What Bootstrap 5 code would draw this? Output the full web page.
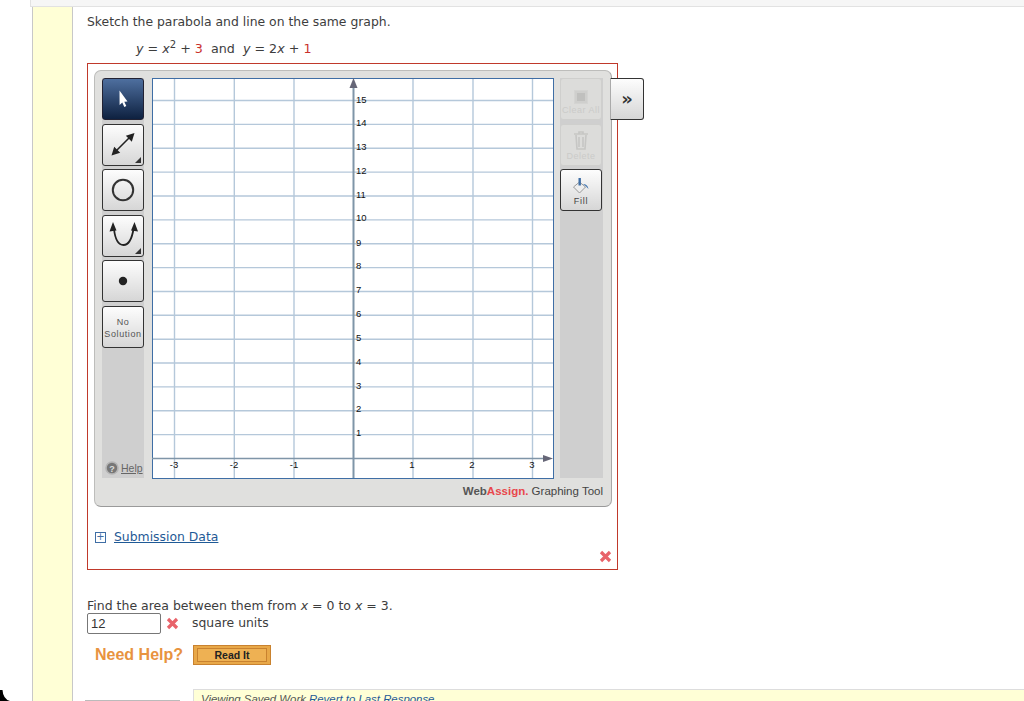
<!DOCTYPE html>
<html lang="en">
<head>
<meta charset="utf-8">
<title>Graphing question</title>
<link href="https://cdn.jsdelivr.net/npm/bootstrap@5.3.0/dist/css/bootstrap.min.css" rel="stylesheet">
<style>
html,body{height:701px;overflow:hidden;background:#fff}
body{font-family:"DejaVu Sans",Verdana,sans-serif;font-size:12.4px;color:#3d3d3d;line-height:1.2;position:relative}
.top-strip{height:7px;margin-left:30px;background:#f6f6f6;border-bottom:1px solid #e2e2e2;border-left:1px solid #e2e2e2}
.page-row{margin-left:32px;height:694px}
.side-rail{width:41px;flex:none;background:#ffffd6;border-left:1px solid #c8c8c8;border-right:1px solid #c8c8c8}
.q-body{padding-left:14px;width:570px;flex:none}
.q-title{margin:0;padding-top:8px;height:34px}
.q-eq{margin:0 0 0 49px;height:22px;font-size:12.7px}
.q-eq sup{font-size:10px;top:-.5em}
.num-red{color:#c9302c}
.answer-box{width:531px;height:507px;border:1px solid #c0392b;padding:6px;position:relative}
.tool-panel{width:518px;height:437px;background:#e0e0de;border:1px solid #bdbdbb;border-bottom-color:#9a9a9a;border-right-color:#a8a8a8;border-radius:7px;padding:7px 7px 0 7px}
.tool-col{width:42px;height:400px;background:#cfcfcf;flex:none}
.tool-col-r{width:43px}
.t-btn{width:42px;height:42px;border:1px solid #333;border-radius:3px;background:linear-gradient(#fdfdfd,#d6d6d6);padding:0;margin:0 0 3.6px 0;color:#333;font-size:9px;letter-spacing:.5px;line-height:12px;font-family:"Liberation Sans",sans-serif;position:relative;display:block}
.t-btn svg{display:block;margin:auto}
.t-active{background:linear-gradient(#4e6f9f,#0e2140);border-color:#223}
.t-off{border-color:#cfcfcd;background:#dcdcda;color:#cbcbc9}
.t-fill{color:#444;letter-spacing:.8px}
.t-nosol{color:#555;line-height:12.5px;padding-top:3px;letter-spacing:.6px}
.corner-tri{position:absolute;right:2px;bottom:2px;width:0;height:0;border-style:solid;border-width:0 0 6px 6px;border-color:transparent transparent #333 transparent}
.help-row{font-family:"Liberation Sans",sans-serif;font-size:10.5px;color:#666;padding-left:3px;height:20px;align-items:center;gap:2px}
.help-row span{text-decoration:underline}
.graph-svg{display:block;flex:none;margin:0 6px 0 8px}
.graph-svg text{font-family:"Liberation Sans",sans-serif;font-size:9.5px;fill:#111}
.tool-foot{text-align:right;font-family:"Liberation Sans",sans-serif;font-size:11.5px;padding:6px 1px 0 0;color:#444}
.tool-foot b{color:#555}
.tool-foot b span{color:#e8474c}
.expand-btn{position:absolute;left:522px;top:14px;width:34px;height:42px;border:1px solid #333;border-left-color:#aaa;border-radius:0 3px 3px 0;background:linear-gradient(#fdfdfd,#d6d6d6);padding:0;font-family:"DejaVu Sans",sans-serif;font-weight:bold;font-size:18px;line-height:18px;color:#333}
.sub-row{margin:23px 0 0 1px;gap:8px;align-items:center}
.plus-box{width:11px;height:11px;border:1px solid #3f6ea5;color:#3f6ea5;display:flex;align-items:center;justify-content:center;font-size:10px;line-height:1}
.sub-link{color:#1f5a96}
.red-x{position:absolute;right:5px;bottom:6px}
.q-find{margin:28px 0 0 0;height:15px;font-size:12.5px}
.ans-row{gap:5px;margin-top:0;height:21px}
.ans-input{width:74px;height:21px;border:1px solid #777;border-radius:2px;padding:0 3px;font-family:"Liberation Sans",sans-serif;font-size:13px;color:#333;background:#fff}
.units{margin-left:8px}
.help-line{margin:11px 0 0 8px;gap:10px}
.need-help{font-family:"Liberation Sans",sans-serif;font-weight:bold;font-size:16px;color:#e8933f;line-height:20px}
.read-it{width:78px;height:20px;border:1px solid #c9822f;background:#e8a848;padding:2px 3px;display:flex}
.read-it span{flex:1;background:#eeb153;border:1px solid #c9822f;font-family:"Liberation Sans",sans-serif;font-weight:bold;font-size:10.5px;color:#222;text-align:center;line-height:12px}
.foot-row{margin-top:24px;gap:13px;align-items:flex-start}
.foot-rule{width:95px;height:1px;flex:none;background:#bbb;margin-top:11px;margin-left:-2px}
.notice{flex:none;width:840px;height:20px;background:#ffffd6;border-top:1px solid #ddd;border-left:1px solid #ddd;padding-left:7px;font-style:italic;font-family:"Liberation Sans",sans-serif;font-size:11.4px;white-space:nowrap;color:#555;line-height:15px;padding-top:2px}
.notice a{color:#1f5a96;text-decoration:none}
.black-corner{position:absolute;left:0;bottom:0;display:block}
</style>
</head>
<body>
<div class="top-strip"></div>
<div class="page-row d-flex">
  <div class="side-rail"></div>
  <div class="q-body">
    <p class="q-title">Sketch the parabola and line on the same graph.</p>
    <p class="q-eq"><i>y</i> = <i>x</i><sup>2</sup> + <span class="num-red">3</span>&nbsp; and &nbsp;<i>y</i> = 2<i>x</i> + <span class="num-red">1</span></p>
    <div class="answer-box">
      <div class="tool-panel">
        <div class="d-flex">
          <div class="tool-col d-flex flex-column">
            <button class="t-btn t-active" type="button" aria-label="Select"><svg width="40" height="40" viewBox="0 0 40 40"><path d="M16.500 11.500l8 11-3.200.2 2 4.300-2 .9-2-4.400-2.700 2.500z" fill="#fff"/></svg></button>
            <button class="t-btn" type="button" aria-label="Line"><svg width="40" height="40" viewBox="0 0 40 40"><path d="M12 27L28 11" stroke="#222" stroke-width="1.600"/><path d="M31.500 8l-2.700 8.700-6-6zM8.500 30.500l2.700-8.700 6 6z" fill="#222"/></svg><span class="corner-tri"></span></button>
            <button class="t-btn" type="button" aria-label="Circle"><svg width="40" height="40" viewBox="0 0 40 40"><circle cx="20" cy="20" r="10.200" fill="none" stroke="#333" stroke-width="2"/></svg></button>
            <button class="t-btn" type="button" aria-label="Parabola"><svg width="40" height="40" viewBox="0 0 40 40"><path d="M11 13c1 9 4 16 9.500 16S29 22 30.500 13" fill="none" stroke="#222" stroke-width="1.800"/><path d="M10 6l3.500 8.500-7 1zM31.500 6l3.500 9.500-7-1z" fill="#222"/></svg><span class="corner-tri"></span></button>
            <button class="t-btn" type="button" aria-label="Point"><svg width="40" height="40" viewBox="0 0 40 40"><circle cx="20" cy="20" r="4.200" fill="#222"/></svg></button>
            <button class="t-btn t-nosol" type="button">No<br>Solution</button>
            <div class="help-row d-flex mt-auto"><svg width="14" height="14" viewBox="0 0 14 14"><circle cx="7" cy="7" r="6" fill="#777" stroke="#b5b5b5" stroke-width="1.600"/><text x="7" y="10.500" font-size="9" font-weight="bold" text-anchor="middle" fill="#ddd" font-family="Liberation Sans">?</text></svg><span>Help</span></div>
          </div>
          <svg class="graph-svg" width="402" height="401" viewBox="152 78 402 401">
            <rect x="152.500" y="78.500" width="401" height="400" fill="#fff"/>
            <g stroke="#b5c8da" stroke-width="1.400">
              <path d="M174.500 78V478M234.300 78V478M294 78V478M413 78V478M473 78V478M532.500 78V478"/>
              <path d="M152 100.500H553M152 124.400H553M152 148.200H553M152 172.100H553M152 196H553M152 219.900H553M152 243.700H553M152 267.600H553M152 291.500H553M152 315.300H553M152 339.200H553M152 363H553M152 386.900H553M152 410.800H553M152 434.600H553"/>
            </g>
            <rect x="152.500" y="78.500" width="401" height="400" fill="none" stroke="#3f6ea5"/>
            <path d="M353.500 82V478" stroke="#7f95a8" stroke-width="2"/>
            <path d="M152 458.500H546" stroke="#7f95a8" stroke-width="1.300"/>
            <path d="M353.500 78l4 10h-8z" fill="#667"/>
            <path d="M553 458.500l-10-3.500v7z" fill="#667"/>
            <g text-anchor="start">
              <text x="356" y="103">15</text><text x="356" y="126">14</text><text x="356" y="150">13</text><text x="356" y="174">12</text><text x="356" y="198">11</text><text x="356" y="221">10</text><text x="356" y="246">9</text><text x="356" y="269">8</text><text x="356" y="293">7</text><text x="356" y="317">6</text><text x="356" y="341">5</text><text x="356" y="365">4</text><text x="356" y="389">3</text><text x="356" y="412">2</text><text x="356" y="436">1</text>
            </g>
            <g text-anchor="middle">
              <text x="174" y="468">-3</text><text x="234" y="468">-2</text><text x="294" y="468">-1</text><text x="412" y="468">1</text><text x="472" y="468">2</text><text x="532" y="468">3</text>
            </g>
          </svg>
          <div class="tool-col tool-col-r d-flex flex-column">
            <button class="t-btn t-off" type="button" disabled><svg width="14" height="14" viewBox="0 0 14 14" class="mt-2"><rect x=".5" y=".5" width="13" height="13" fill="#cfcfcd" stroke="#d4d4d2"/><rect x="3" y="3" width="8" height="8" fill="#c0c0be"/></svg><span>Clear All</span></button>
            <button class="t-btn t-off" type="button" disabled><svg width="16" height="19" viewBox="0 0 16 19" class="mt-1"><path d="M1 3h14M3 4l1 14h8l1-14M6 6v10M10 6v10M6 3V1h4v2" fill="none" stroke="#c6c6c4" stroke-width="1.600"/></svg><span>Delete</span></button>
            <button class="t-btn t-fill" type="button"><svg width="18" height="18" viewBox="0 0 18 18" class="mt-1"><path d="M1.500 10l6-5 6 5-6 6z" fill="#eee" stroke="#999"/><path d="M6.500 1h2.400v7.500H6.500z" fill="#3f6ea5"/><path d="M11 7c3 0 5 1.500 5.500 5l-2.500-2.500z" fill="#4f7fb5"/></svg><span>Fill</span></button>
          </div>
        </div>
        <div class="tool-foot"><b>Web<span>Assign.</span></b> Graphing Tool</div>
      </div>
      <button class="expand-btn" type="button">»</button>
      <div class="sub-row d-flex">
        <span class="plus-box">+</span><a class="sub-link" href="#">Submission Data</a>
      </div>
      <svg class="red-x" width="13" height="13" viewBox="0 0 13 13"><path d="M2 2l9 9M11 2l-9 9" stroke="#e8636a" stroke-width="3.200"/></svg>
    </div>
    <p class="q-find">Find the area between them from <i>x</i> = 0 to <i>x</i> = 3.</p>
    <div class="ans-row d-flex align-items-center">
      <input class="ans-input" type="text" value="12" aria-label="Answer">
      <svg width="13" height="13" viewBox="0 0 13 13"><path d="M2 2l9 9M11 2l-9 9" stroke="#e8636a" stroke-width="3.200"/></svg>
      <span class="units">square units</span>
    </div>
    <div class="help-line d-flex">
      <span class="need-help">Need Help?</span>
      <div class="read-it"><span>Read It</span></div>
    </div>
    <div class="foot-row d-flex">
      <div class="foot-rule"></div>
      <div class="notice">Viewing Saved Work <a href="#">Revert to Last Response</a></div>
    </div>
  </div>
</div>
<svg class="black-corner" width="10" height="11" viewBox="0 0 10 11"><path d="M0 0H2.500Q3 9 10 11H0z" fill="#000"/></svg>
<script src="https://cdn.jsdelivr.net/npm/bootstrap@5.3.0/dist/js/bootstrap.bundle.min.js"></script>
</body>
</html>
